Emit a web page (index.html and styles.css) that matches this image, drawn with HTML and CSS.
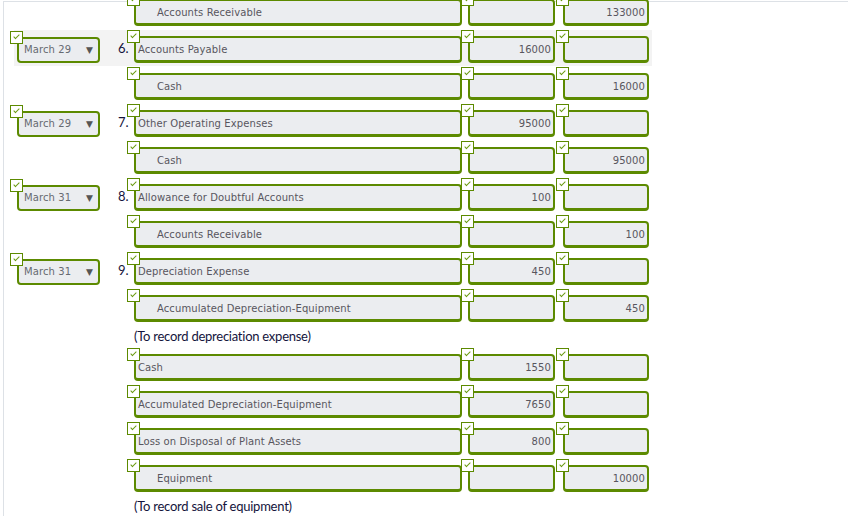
FILE: index.html
```html
<!DOCTYPE html>
<html>
<head>
<meta charset="utf-8">
<link rel="stylesheet" href="styles.css">
</head>
<body>
<div class="page">
  <div class="line first">
    <div class="lead"></div>
    <div class="fld acct ind"><span class="chk"></span>Accounts Receivable</div>
    <div class="fld dr"><span class="chk"></span></div>
    <div class="fld cr"><span class="chk"></span>133000</div>
  </div>

  <div class="line hl">
    <div class="lead">
      <div class="date"><span class="chk"></span><span class="dt">March 29</span><span class="arrow">▼</span></div>
      <span class="num">6.</span>
    </div>
    <div class="fld acct"><span class="chk"></span>Accounts Payable</div>
    <div class="fld dr"><span class="chk"></span>16000</div>
    <div class="fld cr"><span class="chk"></span></div>
  </div>
  <div class="line">
    <div class="lead"></div>
    <div class="fld acct ind"><span class="chk"></span>Cash</div>
    <div class="fld dr"><span class="chk"></span></div>
    <div class="fld cr"><span class="chk"></span>16000</div>
  </div>

  <div class="line">
    <div class="lead">
      <div class="date"><span class="chk"></span><span class="dt">March 29</span><span class="arrow">▼</span></div>
      <span class="num">7.</span>
    </div>
    <div class="fld acct"><span class="chk"></span>Other Operating Expenses</div>
    <div class="fld dr"><span class="chk"></span>95000</div>
    <div class="fld cr"><span class="chk"></span></div>
  </div>
  <div class="line">
    <div class="lead"></div>
    <div class="fld acct ind"><span class="chk"></span>Cash</div>
    <div class="fld dr"><span class="chk"></span></div>
    <div class="fld cr"><span class="chk"></span>95000</div>
  </div>

  <div class="line">
    <div class="lead">
      <div class="date"><span class="chk"></span><span class="dt">March 31</span><span class="arrow">▼</span></div>
      <span class="num">8.</span>
    </div>
    <div class="fld acct"><span class="chk"></span>Allowance for Doubtful Accounts</div>
    <div class="fld dr"><span class="chk"></span>100</div>
    <div class="fld cr"><span class="chk"></span></div>
  </div>
  <div class="line">
    <div class="lead"></div>
    <div class="fld acct ind"><span class="chk"></span>Accounts Receivable</div>
    <div class="fld dr"><span class="chk"></span></div>
    <div class="fld cr"><span class="chk"></span>100</div>
  </div>

  <div class="line">
    <div class="lead">
      <div class="date"><span class="chk"></span><span class="dt">March 31</span><span class="arrow">▼</span></div>
      <span class="num">9.</span>
    </div>
    <div class="fld acct"><span class="chk"></span>Depreciation Expense</div>
    <div class="fld dr"><span class="chk"></span>450</div>
    <div class="fld cr"><span class="chk"></span></div>
  </div>
  <div class="line">
    <div class="lead"></div>
    <div class="fld acct ind"><span class="chk"></span>Accumulated Depreciation-Equipment</div>
    <div class="fld dr"><span class="chk"></span></div>
    <div class="fld cr"><span class="chk"></span>450</div>
  </div>
  <div class="note">(To record depreciation expense)</div>

  <div class="line">
    <div class="lead"></div>
    <div class="fld acct"><span class="chk"></span>Cash</div>
    <div class="fld dr"><span class="chk"></span>1550</div>
    <div class="fld cr"><span class="chk"></span></div>
  </div>
  <div class="line">
    <div class="lead"></div>
    <div class="fld acct"><span class="chk"></span>Accumulated Depreciation-Equipment</div>
    <div class="fld dr"><span class="chk"></span>7650</div>
    <div class="fld cr"><span class="chk"></span></div>
  </div>
  <div class="line">
    <div class="lead"></div>
    <div class="fld acct"><span class="chk"></span>Loss on Disposal of Plant Assets</div>
    <div class="fld dr"><span class="chk"></span>800</div>
    <div class="fld cr"><span class="chk"></span></div>
  </div>
  <div class="line">
    <div class="lead"></div>
    <div class="fld acct ind"><span class="chk"></span>Equipment</div>
    <div class="fld dr"><span class="chk"></span></div>
    <div class="fld cr"><span class="chk"></span>10000</div>
  </div>
  <div class="note">(To record sale of equipment)</div>
</div>
</body>
</html>
```

FILE: styles.css
```css
html, body {
  margin: 0;
  padding: 0;
  background: #ffffff;
  overflow: hidden;
}

.page {
  margin: 1px 0 0 3px;
  border-top: 1px solid #dde1e6;
  border-left: 1px solid #dde1e6;
  height: 600px;
  font-family: "DejaVu Sans", Verdana, sans-serif;
}

.line {
  display: flex;
  align-items: flex-start;
  margin-left: 10px;
  width: 638px;
  height: 37px;
  padding-top: 6px;
  box-sizing: border-box;
}

.line.first {
  margin-top: -9px;
}

.line.hl {
  background: #f3f3f3;
  height: 36px;
  margin-bottom: 1px;
}

.lead {
  display: flex;
  align-items: center;
  width: 120px;
  flex: none;
  height: 27px;
}

.date {
  position: relative;
  margin-left: 3px;
  width: 83px;
  height: 26px;
  box-sizing: border-box;
  border: 2px solid #5c8a00;
  border-radius: 4px;
  background: #ebedf0;
  display: flex;
  align-items: center;
  padding: 0 5px 0 5px;
  font-size: 10px;
  letter-spacing: 0.1px;
  color: #666a70;
}

.dt {
  flex: 1;
}

.arrow {
  font-size: 9px;
  color: #555;
}

.num {
  margin-left: 18px;
  font-family: Lato, "Liberation Sans", sans-serif;
  font-size: 13px;
  color: #14143c;
  margin-top: -3px;
}

.fld {
  position: relative;
  flex: none;
  height: 27px;
  box-sizing: border-box;
  border: 2px solid #5c8a00;
  border-bottom-width: 3px;
  border-radius: 4px;
  background: #ebedf0;
  font-size: 10px;
  letter-spacing: 0.1px;
  color: #58565e;
  display: flex;
  align-items: center;
  white-space: nowrap;
}

.acct {
  width: 328px;
  margin-right: 6px;
  padding-left: 2px;
}

.acct.ind {
  padding-left: 21px;
}

.dr {
  width: 87px;
  margin-right: 8px;
  justify-content: flex-end;
  padding-right: 2px;
}

.cr {
  width: 86px;
  justify-content: flex-end;
  padding-right: 2px;
}

.chk {
  position: absolute;
  left: -9px;
  top: -8px;
  width: 13px;
  height: 13px;
  box-sizing: border-box;
  border: 1px solid #5c8a00;
  background: #ffffff;
  z-index: 2;
}

.chk::after {
  content: "";
  position: absolute;
  left: 4px;
  top: 1px;
  width: 2px;
  height: 5px;
  border-right: 1.5px solid #6a9a10;
  border-bottom: 1.5px solid #6a9a10;
  transform: rotate(45deg);
}

.note {
  margin-left: 130px;
  height: 22px;
  padding-bottom: 3px;
  box-sizing: border-box;
  display: flex;
  align-items: center;
  font-family: Lato, "Liberation Sans", sans-serif;
  font-size: 13px;
  letter-spacing: -0.25px;
  color: #14143c;
}
```
